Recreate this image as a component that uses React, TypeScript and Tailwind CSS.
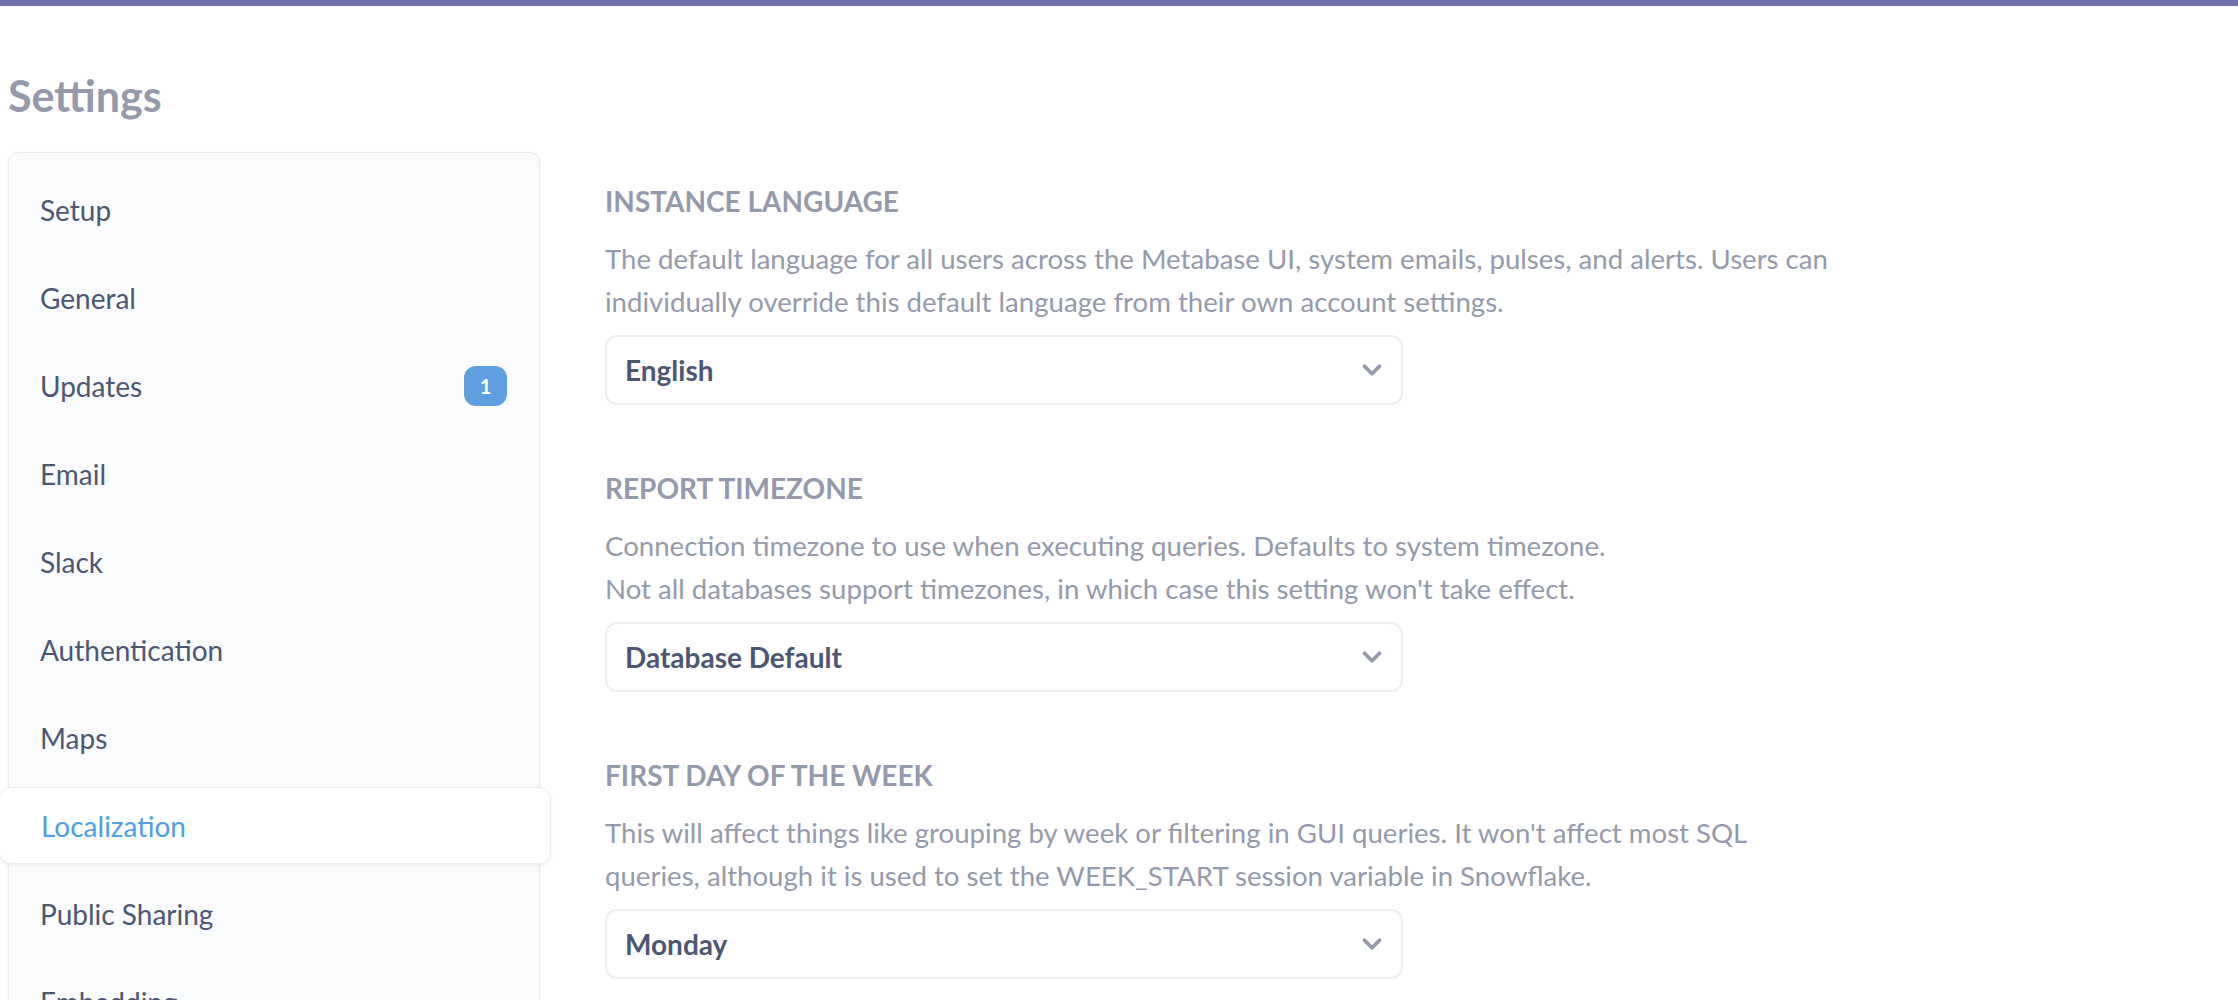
import { ChevronDown } from "lucide-react";

const NAV = [
  { label: "Setup" },
  { label: "General" },
  { label: "Updates", badge: "1" },
  { label: "Email" },
  { label: "Slack" },
  { label: "Authentication" },
  { label: "Maps" },
  { label: "Localization", active: true },
  { label: "Public Sharing" },
  { label: "Embedding" },
  { label: "Caching" },
];

const SECTIONS = [
  {
    title: "Instance language",
    desc: [
      "The default language for all users across the Metabase UI, system emails, pulses, and alerts. Users can",
      "individually override this default language from their own account settings.",
    ],
    value: "English",
  },
  {
    title: "Report timezone",
    desc: [
      "Connection timezone to use when executing queries. Defaults to system timezone.",
      "Not all databases support timezones, in which case this setting won't take effect.",
    ],
    value: "Database Default",
  },
  {
    title: "First day of the week",
    desc: [
      "This will affect things like grouping by week or filtering in GUI queries. It won't affect most SQL",
      "queries, although it is used to set the WEEK_START session variable in Snowflake.",
    ],
    value: "Monday",
  },
];

export default function App() {
  return (
    <div className="h-[1000px] overflow-hidden bg-white" style={{ fontFamily: "Lato, 'Open Sans', sans-serif" }}>
      <div className="h-[6px] bg-[#7172AD]" />

      <div className="pl-[8px]">
        <h1 className="mt-[65px] text-[43px] font-bold leading-[50px] text-[#949AAB]">Settings</h1>

        <div className="mt-[31px] flex items-start">
          {/* Sidebar */}
          <nav className="w-[532px] shrink-0 rounded-[10px] border border-[#EAEAEC] bg-[#F9FBFC] pt-[18px] shadow-[0_1px_3px_rgba(0,0,0,0.06)]">
            <ul className="flex flex-col gap-[11px]">
              {NAV.map((item) =>
                item.active ? (
                  <li
                    key={item.label}
                    className="-ml-[10px] -mr-[12px] flex h-[77px] items-center rounded-[12px] border border-[#EDEBEF] bg-white pl-[41px] text-[28px] text-[#509EE3] shadow-[0_2px_4px_rgba(0,0,0,0.06)]"
                  >
                    {item.label}
                  </li>
                ) : (
                  <li
                    key={item.label}
                    className="flex h-[77px] items-center justify-between pl-[31px] pr-[32px] text-[28px] text-[#4C5773]"
                  >
                    <span>{item.label}</span>
                    {item.badge && (
                      <span className="flex h-[40px] w-[43px] items-center justify-center rounded-[12px] bg-[#5F9FE0] text-[20px] font-bold text-white">
                        {item.badge}
                      </span>
                    )}
                  </li>
                )
              )}
            </ul>
          </nav>

          {/* Settings content */}
          <main className="ml-[65px] flex flex-col gap-[66px] pt-[32px]">
            {SECTIONS.map((s) => (
              <section key={s.title}>
                <h2 className="text-[28px] font-bold uppercase leading-[34px] text-[#949AAB]">{s.title}</h2>
                <p className="mt-[19px] text-[27.6px] leading-[43px] text-[#949AAB]">
                  {s.desc.map((line) => (
                    <span key={line} className="block">
                      {line}
                    </span>
                  ))}
                </p>
                <div className="mt-[12px] flex h-[70px] w-[798px] items-center justify-between rounded-[12px] border-2 border-[#EEEEF0] bg-white pl-[18px] pr-[14px]">
                  <span className="text-[28px] font-bold text-[#4C5773]">{s.value}</span>
                  <ChevronDown size={30} strokeWidth={3} className="text-[#949AAB]" />
                </div>
              </section>
            ))}
          </main>
        </div>
      </div>
    </div>
  );
}
